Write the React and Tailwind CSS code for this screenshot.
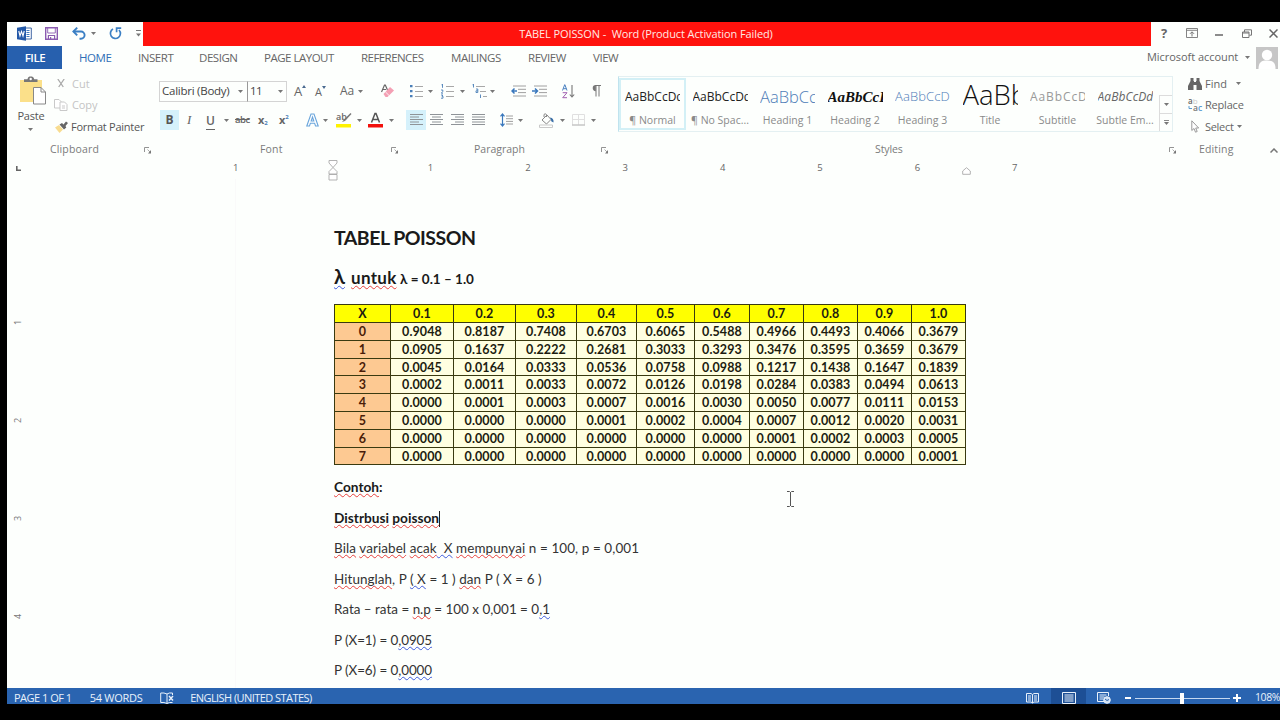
import React from "react";

const Caret = ({ className = "text-[#777]" }) => (
  <svg width="5" height="3" viewBox="0 0 5 3" className={className}>
    <path d="M0 0h5L2.5 3z" fill="currentColor" />
  </svg>
);

const Launcher = () => (
  <svg width="8" height="7" viewBox="0 0 8 7" fill="none" stroke="#888">
    <path d="M.5 5V.5H5" strokeWidth="0.9" />
    <path d="M3.5 2.5L6 5" strokeWidth="0.7" />
    <path d="M4 6.5h3V3z" fill="#777" stroke="none" />
  </svg>
);

function TitleBar() {
  return (
    <div className="flex h-6 shrink-0">
      <div className="flex w-[136px] items-center pb-[2px] pl-[10px]">
        <div className="w-7">
          <svg width="15" height="15" viewBox="0 0 15 15">
            <path d="M7 2h7.3v11H7z" fill="#fff" stroke="#2b579a" strokeWidth="0.9" />
            <path d="M9.5 4.5h3M9.5 6.5h3M9.5 8.5h3M9.5 10.5h3" stroke="#2b6cb8" strokeWidth="0.9" />
            <path d="M0 1.8L9 .3v14.4L0 13.2z" fill="#2359a8" />
            <path d="M1.8 5l1.2 5L4.5 5.4 6 10l1.2-5" fill="none" stroke="#fff" strokeWidth="1.1" />
          </svg>
        </div>
        <div className="w-[27px]">
          <svg width="13" height="13" viewBox="0 0 13 13" fill="none" stroke="#8a5bb0" strokeWidth="1.4">
            <path d="M.7.7h11.6v11.6H.7z" />
            <path d="M2.7 1v5h7.6V1" strokeWidth="0.9" />
            <path d="M3.4 12V8.5h6.2V12M5.6 10v2" strokeWidth="1.2" />
          </svg>
        </div>
        <div className="w-[19px]">
          <svg width="14" height="13" viewBox="0 0 14 13" fill="none" stroke="#3a7fc4" strokeWidth="1.9">
            <path d="M1.5 4.5H9a3.6 3.6 0 0 1 0 7.2H7.5" />
            <path d="M5.2.7L1.4 4.5l3.8 3.8" />
          </svg>
        </div>
        <div className="w-[18px]"><Caret /></div>
        <div className="w-[27px]">
          <svg width="13" height="13" viewBox="0 0 13 13" fill="none" stroke="#3a7fc4" strokeWidth="1.7">
            <path d="M4 2.1A5 5 0 1 0 10 3" />
            <path d="M7.6 5.2V1.2h4.6" />
          </svg>
        </div>
        <svg width="5" height="7" viewBox="0 0 5 7" className="text-[#777]">
          <path d="M0 .5h5" stroke="currentColor" />
          <path d="M0 3.5h5L2.5 6.5z" fill="currentColor" />
        </svg>
      </div>
      <div className="flex w-[1008px] items-center justify-center bg-[#ff120d] pr-[2px] text-[11px] font-medium tracking-[-0.1px] whitespace-pre text-[#ffe9e4]">
        TABEL POISSON -  Word (Product Activation Failed)
      </div>
      <div className="flex items-center pb-[2px] pl-[9px] text-[#666]">
        <div className="w-[26px] pl-px text-[13px] leading-none font-bold">?</div>
        <div className="w-[29px]">
          <svg width="12" height="10" viewBox="0 0 12 10" fill="none" stroke="#777">
            <path d="M.5.5h11v9H.5zM.5 2.3h11" strokeWidth="0.9" />
            <path d="M6 8.5V4M4 5.8l2-2 2 2" />
          </svg>
        </div>
        <div className="w-[27px] pt-[3px]">
          <svg width="8" height="2"><path d="M0 1h8" stroke="#666" strokeWidth="1.5" /></svg>
        </div>
        <div className="w-[27px]">
          <svg width="10" height="9" viewBox="0 0 10 9" fill="none" stroke="#777">
            <path d="M.5 3h6.5v5.5H.5zM.5 4h6.5" />
            <path d="M2.5 3V.8h7v5.4H7.3" />
          </svg>
        </div>
        <svg width="9" height="9" viewBox="0 0 9 9" stroke="#666" strokeWidth="1.5"><path d="M.5.5l8 8M8.5.5l-8 8" /></svg>
      </div>
    </div>
  );
}

function Tabs() {
  return (
    <div className="flex h-[23px] shrink-0 items-center text-[11.5px] whitespace-nowrap text-[#666]">
      <div className="flex h-full w-[55px] items-center justify-center bg-[#2760ae] pl-px font-semibold tracking-[-0.4px] text-white">FILE</div>
      <div className="w-[76px] pl-[17px] tracking-[-0.45px] text-[#2f6fb7]">HOME</div>
      <div className="w-[61px] tracking-[-0.45px]">INSERT</div>
      <div className="w-[65px] tracking-[-0.45px]">DESIGN</div>
      <div className="w-[97px] tracking-[-0.5px]">PAGE LAYOUT</div>
      <div className="w-[90px] tracking-[-0.55px]">REFERENCES</div>
      <div className="w-[77px] tracking-[-0.45px]">MAILINGS</div>
      <div className="w-[65px] tracking-[-0.45px]">REVIEW</div>
      <div className="w-[554px] tracking-[-0.45px]">VIEW</div>
      <div className="w-[98px] text-[11px] tracking-[-0.05px]">Microsoft account</div>
      <div className="w-[11px]"><Caret /></div>
      <svg width="22" height="22" viewBox="0 0 22 22">
        <path d="M0 0h22v22H0z" fill="#c6c6c6" />
        <circle cx="11" cy="8" r="5.2" fill="#fff" />
        <path d="M2.5 22c0-7 3-8.500 8.500-8.500S19.500 15 19.500 22z" fill="#fff" />
      </svg>
    </div>
  );
}

function GroupLabel({ children, className = "" }) {
  return <div className={`mt-[2px] flex h-[18px] items-center text-[10.5px] tracking-[0.15px] text-[#7b7b7b] ${className}`}>{children}</div>;
}

function Clipboard() {
  return (
    <div className="flex w-[152px] flex-col">
      <div className="flex h-[70px]">
        <div className="flex w-[47px] flex-col items-center pt-[7px]">
          <svg width="27" height="30" viewBox="0 0 27 30" className="ml-[5px]">
            <path d="M0 4h22v22H0z" fill="#fbe08a" />
            <path d="M4 6V3.200h3.500C8 1 9 .5 10.700.5s3 .5 3.500 2.700H17.500V6z" fill="#777" />
            <circle cx="10.700" cy="3" r="1.200" fill="#fff" />
            <path d="M13.500 11.500h7.500l4.500 4.500v12h-12z" fill="#fff" stroke="#888" />
            <path d="M21 11.500V16h4.500" fill="none" stroke="#888" />
          </svg>
          <div className="mt-[2px] ml-px text-[11px] leading-4 tracking-[-0.2px] text-[#555]">Paste</div>
          <div className="mt-[4px]"><Caret /></div>
        </div>
        <div className="flex flex-col pt-[4px] text-[11px] whitespace-nowrap">
          <div className="flex h-[21.500px] items-center text-[#c4c4c4]">
            <div className="w-[18px] pl-[3px]">
              <svg width="8" height="10" viewBox="0 0 8 10" fill="none" stroke="#aaa" strokeWidth="1.300"><path d="M.8 0l5.500 8M7.200 0L1.700 8" /></svg>
            </div>
            Cut
          </div>
          <div className="flex h-[21.500px] items-center text-[#c4c4c4]">
            <div className="w-[18px]">
              <svg width="14" height="12" viewBox="0 0 14 12" fill="#fff" stroke="#c9c9c9">
                <path d="M.5.5H5l2 2v6.500H.5z" />
                <path d="M6 3h4.500L13 5.500v6H6zM8 7h3M8 9h3" />
              </svg>
            </div>
            <span className="tracking-[-0.1px]">Copy</span>
          </div>
          <div className="flex h-[21.500px] items-center text-[#555]">
            <div className="w-[17px] pl-px">
              <svg width="14" height="12" viewBox="0 0 14 12">
                <path d="M0 6.500L4 4l4 4.500L4.500 12z" fill="#f8dc90" />
                <path d="M4.500 3.500L7 2l1.500 1.500L11 .5 13 2l-2.500 3 .8 1.500L9 8.500z" fill="#666" />
              </svg>
            </div>
            <span className="tracking-[-0.25px]">Format Painter</span>
          </div>
        </div>
      </div>
      <GroupLabel className="pl-[43px]">
        <div className="w-[94px]">Clipboard</div>
        <Launcher />
      </GroupLabel>
    </div>
  );
}

function FontGroup() {
  return (
    <div className="flex w-[247px] flex-col">
      <div className="flex h-[70px] flex-col pt-px">
        <div className="flex h-[42px] items-center">
          <div className="flex h-[21px] w-[135px] items-center text-[11.500px] text-[#444]">
            <div className="flex h-full w-[89px] items-center justify-between border border-[#d4d4d4] border-r-[#999] pr-1 pl-[2px] tracking-[-0.25px] whitespace-nowrap">Calibri (Body) <Caret /></div>
            <div className="flex h-full w-[39px] items-center justify-between border border-l-0 border-[#d4d4d4] pr-[3px] pl-[2px] tracking-[-0.5px]">11 <Caret /></div>
          </div>
          <div className="flex w-[21px] text-[13px] leading-none text-[#666]">
            A<svg width="4" height="3" viewBox="0 0 4 3"><path d="M0 3l2-3 2 3z" fill="#4a6a90" /></svg>
          </div>
          <div className="flex w-[25px] text-[11px] leading-none text-[#666]">
            A<svg width="4" height="3" viewBox="0 0 4 3"><path d="M0 0l2 3 2-3z" fill="#4a6a90" /></svg>
          </div>
          <div className="w-[18px] text-[12px] text-[#666]">Aa</div>
          <div className="w-[23px]"><Caret /></div>
          <svg width="14" height="14" viewBox="0 0 14 14">
            <path d="M.5 8L3.500 1h.8L6.500 6M1.800 5.500H5" fill="none" stroke="#666" strokeWidth="1.200" />
            <path d="M2.500 10L9 3l4 3.500L6.500 13H4.500z" fill="#f4a0b4" />
            <path d="M4.500 8l3.600 3.500" stroke="#fff" strokeWidth="0.8" />
          </svg>
        </div>
        <div className="-mt-[2px] flex h-5 items-center text-[#666]">
          <div className="mr-[6px] ml-px flex h-5 w-[19px] items-center justify-center bg-[#d5f1fb] text-[12px] font-bold text-[#555]">B</div>
          <div className="w-[21px] pl-[2px] font-[Liberation_Serif] text-[13px] italic">I</div>
          <div className="w-[18px] text-[12px] leading-[11px] font-semibold"><span className="border-b border-[#666]">U</span></div>
          <div className="w-[11px]"><Caret /></div>
          <div className="w-[22px] text-[9.500px] font-semibold tracking-[-0.5px] line-through">abc</div>
          <div className="flex w-[21px] items-end pl-px text-[11px] leading-3 font-bold">x<span className="text-[6px] leading-[6px] text-[#4a80b8]">2</span></div>
          <div className="flex w-[28px] items-start pl-px text-[11px] leading-3 font-bold">x<span className="text-[6px] leading-[6px] text-[#4a80b8]">2</span></div>
          <div className="w-[17px]">
            <svg width="13" height="14" viewBox="0 0 13 14" fill="#fff" stroke="#6aa6dc" strokeWidth="1.1">
              <path d="M.8 13L5 1h3l4.200 12H9.500l-.9-2.800H4.400L3.500 13z" />
              <path d="M5.200 8L6.500 4 7.800 8z" />
            </svg>
          </div>
          <div className="w-[13px]"><Caret /></div>
          <div className="w-[21px]">
            <svg width="17" height="16" viewBox="0 0 17 16" className="overflow-visible">
              <path d="M0 12h15v3.500H0z" fill="#fff200" />
              <text x="0" y="8" fontSize="9" fontWeight="600" fill="#666">ab</text>
              <path d="M14.500 1L8 7.500 6 10l3-1 6.500-7z" fill="#777" />
            </svg>
          </div>
          <div className="w-[11px]"><Caret /></div>
          <div className="w-[21px]">
            <svg width="15" height="16" viewBox="0 0 15 16">
              <path d="M0 12h15v3.500H0z" fill="#f2100c" />
              <path d="M3.500 10.500L7 1.500h1l3.500 9M4.800 7.500h5.400" fill="none" stroke="#555" strokeWidth="1.500" />
            </svg>
          </div>
          <Caret />
        </div>
      </div>
      <GroupLabel className="pl-[101px]">
        <div className="w-[131px]">Font</div>
        <Launcher />
      </GroupLabel>
    </div>
  );
}

const AlignIcon = ({ d }) => (
  <svg width="13" height="12" viewBox="0 0 13 12" stroke="#8f9498" strokeWidth="1"><path d={d} /></svg>
);

function Paragraph() {
  return (
    <div className="flex w-[212px] flex-col">
      <div className="flex h-[70px] flex-col pt-px">
        <div className="flex h-[42px] items-center pl-[4px]">
          <div className="w-[18px]">
            <svg width="13" height="14" viewBox="0 0 13 14">
              <path d="M0 1h2.500v2.200H0zM0 6h2.500v2.200H0zM0 11h2.500v2.200H0z" fill="#4a7fb8" />
              <path d="M5 2.500h8M5 7.500h8M5 12.500h8" stroke="#a8a8a8" />
            </svg>
          </div>
          <div className="w-[13px]"><Caret /></div>
          <div className="w-[19px]">
            <svg width="13" height="15" viewBox="0 0 13 15">
              <path d="M.5.800L1.500 0v3.800M0 6h1.800v1.400L.3 9.200H2M0 11h1.800l-.8 1.300h1v1.900H0" fill="none" stroke="#4a7fb8" strokeWidth="0.900" />
              <path d="M5 2.500h8M5 7.500h8M5 12.500h8" stroke="#a8a8a8" />
            </svg>
          </div>
          <div className="w-[12px]"><Caret /></div>
          <div className="w-[18px]">
            <svg width="15" height="15" viewBox="0 0 15 15">
              <path d="M.5.800L1.500 0v3.500M4 5h1.800v3.500H4V6.800h1.800M8.500 10.500v3.500" fill="none" stroke="#4a7fb8" strokeWidth="0.900" />
              <path d="M4 2.500h9M8 7.500h6M11 12.500h4" stroke="#a8a8a8" />
            </svg>
          </div>
          <div className="w-[21px]"><Caret /></div>
          <div className="w-[21px]">
            <svg width="15" height="12" viewBox="0 0 15 12" fill="none">
              <path d="M2 1h13M7 4.300h8M7 7.600h8M2 11h13" stroke="#a0a0a0" />
              <path d="M6 6H1.200M3.500 3.500L1 6l2.500 2.500" stroke="#3a78bd" strokeWidth="1.500" />
            </svg>
          </div>
          <div className="w-[30px]">
            <svg width="15" height="12" viewBox="0 0 15 12" fill="none">
              <path d="M2 1h13M7 4.300h8M7 7.600h8M2 11h13" stroke="#a0a0a0" />
              <path d="M0 6h5M3 3.500L5.500 6 3 8.500" stroke="#3a78bd" strokeWidth="1.500" />
            </svg>
          </div>
          <div className="w-[29px]">
            <svg width="13" height="15" viewBox="0 0 13 15" fill="none">
              <path d="M.5 6.500L2.700.7h.2L5 6.500M1.300 4.700h3" stroke="#4a80c0" />
              <path d="M.7 8.700H5L.7 13.700H5" stroke="#a060b0" />
              <path d="M10 1v12M7.800 10.500L10 13l2.200-2.500" stroke="#777" strokeWidth="1.100" />
            </svg>
          </div>
          <svg width="10" height="12" viewBox="0 0 10 12">
            <path d="M4.800 0A3 3 0 0 0 4.800 6.200z" fill="#777" />
            <path d="M4 .5h6M5 0v11.500M8 0v11.500" stroke="#777" strokeWidth="1" />
          </svg>
        </div>
        <div className="-mt-[2px] flex h-5 items-center">
          <div className="mr-1 flex h-5 w-5 items-center justify-center bg-[#d5f1fb]"><AlignIcon d="M0 .5h13M0 3h9M0 5.500h13M0 8h9M0 10.500h13" /></div>
          <div className="w-[21px]"><AlignIcon d="M0 .5h13M2 3h9M0 5.500h13M2 8h9M0 10.500h13" /></div>
          <div className="w-[21px]"><AlignIcon d="M0 .5h13M4 3h9M0 5.500h13M4 8h9M0 10.500h13" /></div>
          <div className="w-[28px]"><AlignIcon d="M0 .5h13M0 3h13M0 5.500h13M0 8h13M0 10.500h13" /></div>
          <div className="w-[18px]">
            <svg width="14" height="14" viewBox="0 0 14 14" fill="none">
              <path d="M2.500 1v12M.5 3.300L2.500 1l2 2.300M.5 10.700l2 2.300 2-2.300" stroke="#3a78bd" strokeWidth="1.200" />
              <path d="M6 3h7M6 5.700h7M6 8.400h7M6 11h7" stroke="#a0a0a0" />
            </svg>
          </div>
          <div className="w-[21px]"><Caret /></div>
          <div className="w-[21px]">
            <svg width="16" height="15" viewBox="0 0 16 15" fill="none">
              <path d="M3 7l5-5 4 4.500-4.500 4.500zM5 4V1.500Q6 0 7.500 1.500V4" stroke="#888" />
              <path d="M11 4.500q4 .5 3.500 5l-2-1z" fill="#3a6fa8" />
              <path d="M.5 12h13v2.500H.5z" stroke="#c9c9c9" />
            </svg>
          </div>
          <div className="w-[12px]"><Caret /></div>
          <div className="w-[19px]">
            <svg width="13" height="12" viewBox="0 0 13 12" fill="none">
              <path d="M.5.500h12v10M.5.500v10M6.500 1v9.500M1 5.500h11" stroke="#e0e0e0" />
              <path d="M0 11h13" stroke="#aaa" />
            </svg>
          </div>
          <Caret />
        </div>
      </div>
      <GroupLabel className="pl-[68px]">
        <div className="w-[127px] tracking-[0px]">Paragraph</div>
        <Launcher />
      </GroupLabel>
    </div>
  );
}

const STYLES = [
  ["AaBbCcDd", "¶ Normal", "text-[12px] text-[#222]"],
  ["AaBbCcDd", "¶ No Spac...", "text-[12px] text-[#222]"],
  ["AaBbCc", "Heading 1", "text-[16.5px] font-light text-[#4f7db8]"],
  ["AaBbCcD", "Heading 2", "font-[Liberation_Serif] text-[15px] font-bold italic text-[#111]"],
  ["AaBbCcD", "Heading 3", "text-[13px] font-light tracking-[0.1px] text-[#4f7db8]"],
  ["AaBb", "Title", "pb-[5px] text-[27.5px] font-light text-[#111]"],
  ["AaBbCcD", "Subtitle", "text-[12px] tracking-[0.9px] text-[#999]"],
  ["AaBbCcDd", "Subtle Em...", "text-[12px] italic tracking-[0.1px] text-[#666]"],
];

function Styles() {
  return (
    <div className="flex w-[562px] flex-col">
      <div className="h-[70px] pt-[7px]">
        <div className="flex h-[56px] w-[555px] border border-[#e4f0f2] border-l-[#bfe3ee]">
          <div className="flex w-[540px]">
            {STYLES.map(([sample, name, cls], i) => (
              <div key={i} className={`mt-px mr-[0.500px] mb-px flex w-[67px] shrink-0 flex-col items-center border-[2px] pt-[2px] ${i === 0 ? "border-[#d3f0f6]" : "border-transparent"}`}>
                <div className={`flex h-[30px] w-[55px] items-center overflow-hidden whitespace-nowrap ${cls}`}>{sample}</div>
                <div className="text-[10.500px] leading-4 whitespace-nowrap text-[#8a8a8a]">{name}</div>
              </div>
            ))}
          </div>
          <div className="flex w-[14px] flex-col">
            <div className="h-[18px]" />
            <div className="flex h-[19px] items-center justify-center border border-r-0 border-[#dcdcdc]"><Caret /></div>
            <div className="flex h-[17px] flex-col items-center justify-center gap-px border-l border-[#dcdcdc]">
              <div className="h-px w-[5px] bg-[#888]" />
              <Caret />
            </div>
          </div>
        </div>
      </div>
      <GroupLabel className="pl-[257px]">
        <div className="w-[294px] tracking-[-0.1px]">Styles</div>
        <Launcher />
      </GroupLabel>
    </div>
  );
}

function Editing() {
  return (
    <div className="flex w-[100px] flex-col pl-[8px]">
      <div className="flex h-[70px] flex-col pt-1 text-[11px] text-[#666]">
        <div className="flex h-[21.500px] items-center">
          <div className="w-[17px]">
            <svg width="14" height="12" viewBox="0 0 14 12" fill="#666">
              <path d="M2.500 0h3v3H6V4h2V3h.5V0h3v3L14 8v4H8.500V7h-3v5H0V8l2.500-5z" />
            </svg>
          </div>
          <div className="w-[31px]">Find</div>
          <Caret />
        </div>
        <div className="flex h-[21.500px] items-center">
          <div className="w-[17px]">
            <svg width="16" height="14" viewBox="0 0 16 14" className="overflow-visible">
              <text x="0" y="6" fontSize="8" fontWeight="600" fill="#666">a<tspan fill="#ccc" fontWeight="400">b</tspan></text>
              <text x="5" y="13" fontSize="8.500" fontWeight="600" fill="#777">a<tspan fill="#5a9bd0">c</tspan></text>
              <path d="M1 8v2.500h3" fill="none" stroke="#5a9bd0" />
            </svg>
          </div>
          <span className="tracking-[-0.2px]">Replace</span>
        </div>
        <div className="flex h-[21.500px] items-center">
          <div className="w-[17px] pl-[3px]">
            <svg width="9" height="13" viewBox="0 0 9 13" fill="#fff" stroke="#999">
              <path d="M.8.800v9.700L3 8.500l1.500 3.700 1.700-.7-1.500-3.500h3z" />
            </svg>
          </div>
          <div className="w-[32px] tracking-[-0.3px]">Select</div>
          <Caret />
        </div>
      </div>
      <GroupLabel className="pl-[11px]">
        <div className="w-[71px]">Editing</div>
        <svg width="8" height="5" viewBox="0 0 8 5" fill="none" stroke="#777" strokeWidth="1.500"><path d="M.5 4.500L4 1l3.500 3.500" /></svg>
      </GroupLabel>
    </div>
  );
}

const RULER_MID = ["1", "2", "3", "4", "5", "6"];

function Ruler() {
  const num = "flex w-[97.4px] shrink-0 justify-center";
  return (
    <div className="flex h-5 shrink-0 items-center pb-[2px] text-[9.500px] leading-none text-[#666]">
      <div className="w-[180px] pl-[9px]">
        <svg width="5" height="5" viewBox="0 0 5 5" fill="none" stroke="#666" strokeWidth="1.600"><path d="M.8 0v4.200H5" /></svg>
      </div>
      <div className={num}>1</div>
      <div className={num}>
        <svg width="10" height="21" viewBox="0 0 10 21" fill="#fff" stroke="#aaa" strokeWidth="0.900" className="mt-[4px]">
          <path d="M1 .5h8v2.500L5 7.500 1 3zM1 14v-2.500L5 7.500l4 4V14zM1 14.500h8V20H1z" />
        </svg>
      </div>
      {RULER_MID.map((n) => <div key={n} className={num}>{n}</div>)}
      <div className="flex w-0 justify-center">
        <svg width="9" height="8" viewBox="0 0 9 8" fill="#fff" stroke="#aaa" strokeWidth="0.900" className="mt-[6px] shrink-0">
          <path d="M4.500.700L8.300 4v3.300H.7V4z" />
        </svg>
      </div>
      <div className={num}>7</div>
    </div>
  );
}

const HEAD = ["X", "0.1", "0.2", "0.3", "0.4", "0.5", "0.6", "0.7", "0.8", "0.9", "1.0"];
const ROWS = [
  ["0", "0.9048", "0.8187", "0.7408", "0.6703", "0.6065", "0.5488", "0.4966", "0.4493", "0.4066", "0.3679"],
  ["1", "0.0905", "0.1637", "0.2222", "0.2681", "0.3033", "0.3293", "0.3476", "0.3595", "0.3659", "0.3679"],
  ["2", "0.0045", "0.0164", "0.0333", "0.0536", "0.0758", "0.0988", "0.1217", "0.1438", "0.1647", "0.1839"],
  ["3", "0.0002", "0.0011", "0.0033", "0.0072", "0.0126", "0.0198", "0.0284", "0.0383", "0.0494", "0.0613"],
  ["4", "0.0000", "0.0001", "0.0003", "0.0007", "0.0016", "0.0030", "0.0050", "0.0077", "0.0111", "0.0153"],
  ["5", "0.0000", "0.0000", "0.0000", "0.0001", "0.0002", "0.0004", "0.0007", "0.0012", "0.0020", "0.0031"],
  ["6", "0.0000", "0.0000", "0.0000", "0.0000", "0.0000", "0.0000", "0.0001", "0.0002", "0.0003", "0.0005"],
  ["7", "0.0000", "0.0000", "0.0000", "0.0000", "0.0000", "0.0000", "0.0000", "0.0000", "0.0000", "0.0001"],
];

function PoissonTable() {
  const cell = "flex items-center justify-center border-r border-b border-[#3a3a10] pt-[2px] leading-none";
  return (
    <div className="grid w-[633px] grid-cols-[56px_63px_62px_61px_60px_58px_55px_54px_54px_54px_54px] grid-rows-[18px_18px_18px_17px_18px_18px_18px_18px_17px] text-[12.5px] font-bold tracking-[0.1px] text-[#1c1c10]">
      {HEAD.map((h, i) => <div key={h} className={`${cell} -mt-px border-t bg-[#ffff00] ${i === 0 ? "-ml-px border-l" : ""}`}>{h}</div>)}
      {ROWS.map((row) =>
        row.map((v, i) => (
          <div key={`${row[0]}-${i}`} className={`${cell} ${i === 0 ? "-ml-px border-l bg-[#fdc992] text-[#4a1c08]" : "bg-[#ffffe1]"}`}>{v}</div>
        ))
      )}
    </div>
  );
}

const wave = "underline decoration-wavy decoration-[0.7px] underline-offset-[0.5px] [text-decoration-skip-ink:none]";
const Red = ({ children }) => <span className={`${wave} decoration-[#e8403c]`}>{children}</span>;
const Blue = ({ children }) => <span className={`${wave} decoration-[#3f5bdc]`}>{children}</span>;

const Line = ({ children, className = "" }) => (
  <p className={`h-[30.5px] leading-[30.5px] whitespace-pre ${className}`}>{children}</p>
);

function Document() {
  const strong = "text-[13.700px] font-bold text-[#1a1a1a]";
  return (
    <div className="relative flex min-h-0 flex-1 overflow-hidden">
      <div className="flex w-[229px] shrink-0 flex-col border-r border-[#fafafa] pt-[95px] pl-[6px] text-[9px] leading-none text-[#777]">
        {["1", "2", "3", "4"].map((n) => (
          <div key={n} className="flex h-[97.800px] w-[10px] items-center justify-center"><span className="-rotate-90">{n}</span></div>
        ))}
      </div>
      <div className="flex flex-col pl-[98px] font-[Lato,Carlito,sans-serif] text-[#333]">
        <div className="mt-[44px] flex h-[30px] items-center text-[19.500px] font-bold tracking-[-0.5px] text-[#1a1a1a]">TABEL POISSON</div>
        <div className="mt-[8px] flex h-8 items-baseline text-[13.500px] font-bold whitespace-pre text-[#1a1a1a]">
          <span className="w-[17px] text-[20px]"><Blue>λ</Blue></span>
          <span className="w-[49px] text-[17px] tracking-[0.3px]"><Red>untuk</Red></span>
          <span>λ = 0.1 – 1.0</span>
        </div>
        <div className="mt-[12px] ml-px"><PoissonTable /></div>
        <div className="mt-[7px] text-[13.450px]">
          <Line className={strong}><Red>Contoh</Red>:</Line>
          <Line className={strong}><Red>Distrbusi</Red> <Red>poisson</Red><span className="inline-block h-4 w-px bg-[#222] align-middle" /></Line>
          <Line className="tracking-[0.1px]"><Red>Bila</Red> <Red>variabel</Red> <Red>acak</Red><Blue>  X</Blue> <Red>mempunyai</Red> n = 100, p = 0,001</Line>
          <Line className="tracking-[0.06px]"><Red>Hitunglah</Red>, P <Blue>( X</Blue> = 1 ) <Red>dan</Red> P ( X = 6 )</Line>
          <Line>Rata – rata = <Red>n.p</Red> = 100 x 0,001 = 0<Blue>,1</Blue></Line>
          <Line className="tracking-[-0.08px]">P (X=1) = 0<Blue>,0905</Blue></Line>
          <Line className="tracking-[-0.08px]">P (X=6) = 0<Blue>,0000</Blue></Line>
        </div>
      </div>
      <svg width="7" height="16" viewBox="0 0 7 16" fill="none" stroke="#555" className="absolute top-[312px] left-[780px]">
        <path d="M0 .500h2.500L3.500 1.500 4.500.500H7M3.500 1v14M0 15.500h2.500l1-1 1 1H7" />
      </svg>
    </div>
  );
}

function StatusBar() {
  return (
    <div className="flex h-4 shrink-0 items-center overflow-hidden bg-[#2a64b0] pt-[4px] text-[11px] font-medium whitespace-nowrap text-[#e8f1fb]">
      <div className="w-[76px] pl-[7px] tracking-[-0.5px]">PAGE 1 OF 1</div>
      <div className="ml-[7px] w-[71px] tracking-[-0.25px]">54 WORDS</div>
      <div className="w-[30px]">
        <svg width="15" height="12" viewBox="0 0 15 12" fill="none" stroke="#e8f1fb">
          <path d="M7 2Q4 .5.700 1v9.500Q4 10 7 11.500M7 2v9.500M7 2Q9 .5 12.500 1v2M7 11.500Q9 10 12.500 10.500" />
          <path d="M9 4l4 4.500M13 4L9 8.500" strokeWidth="1.400" />
        </svg>
      </div>
      <div className="w-[833px] tracking-[-0.56px]">ENGLISH (UNITED STATES)</div>
      <div className="w-[32px] pl-[7px]">
        <svg width="13" height="12" viewBox="0 0 13 12" fill="none" stroke="#e8f1fb">
          <path d="M.500 1.500H5L6.500 2.500 8 1.500h4.500v8.500H8L6.500 11 5 10H.500zM6.500 2.500V11" />
          <path d="M2 4h3M2 6h3M2 8h3M8 4h3M8 6h3M8 8h3" />
        </svg>
      </div>
      <div className="-mt-[4px] flex h-4 w-[35px] items-center justify-center bg-[#1d4f95] pt-[4px]">
        <svg width="14" height="12" viewBox="0 0 14 12" fill="none" stroke="#e8f1fb"><path d="M.500.500h13v11H.500zM2.500 3h9M2.500 5h9M2.500 7h9M2.500 9h9" /></svg>
      </div>
      <div className="flex w-[39px] pl-[11px]">
        <svg width="14" height="12" viewBox="0 0 14 12" fill="none" stroke="#e8f1fb">
          <path d="M7 9.500H.500v-9h11V4M2.500 3h7M2.500 5h5M2.500 7h4" />
          <circle cx="10" cy="8" r="3.300" fill="#cfe0f4" />
          <path d="M8 7l2 1.500 2-1" stroke="#2a64b0" />
        </svg>
      </div>
      <div className="flex items-center">
        <div className="mr-[4px] h-[2px] w-[6px] bg-white" />
        <div className="h-px w-[45px] bg-[#c5d8f0]" />
        <div className="h-[11px] w-1 bg-white" />
        <div className="h-px w-[46px] bg-[#c5d8f0]" />
        <svg width="8" height="8" viewBox="0 0 8 8" stroke="#fff" strokeWidth="2" className="ml-[3px]"><path d="M0 4h8M4 0v8" /></svg>
      </div>
      <div className="ml-[14px] text-[10.500px] tracking-[-0.4px]">108%</div>
    </div>
  );
}

export default function App() {
  return (
    <div className="flex h-[720px] w-[1280px] flex-col overflow-hidden bg-black pt-[22px] pb-4 pl-[7px] font-[Open_Sans,Noto_Sans,sans-serif]">
      <div className="flex min-h-0 flex-1 flex-col bg-[#fdfffd]">
        <TitleBar />
        <Tabs />
        <div className="flex h-[90px] shrink-0">
          <Clipboard />
          <FontGroup />
          <Paragraph />
          <Styles />
          <Editing />
        </div>
        <Ruler />
        <Document />
        <StatusBar />
      </div>
    </div>
  );
}
